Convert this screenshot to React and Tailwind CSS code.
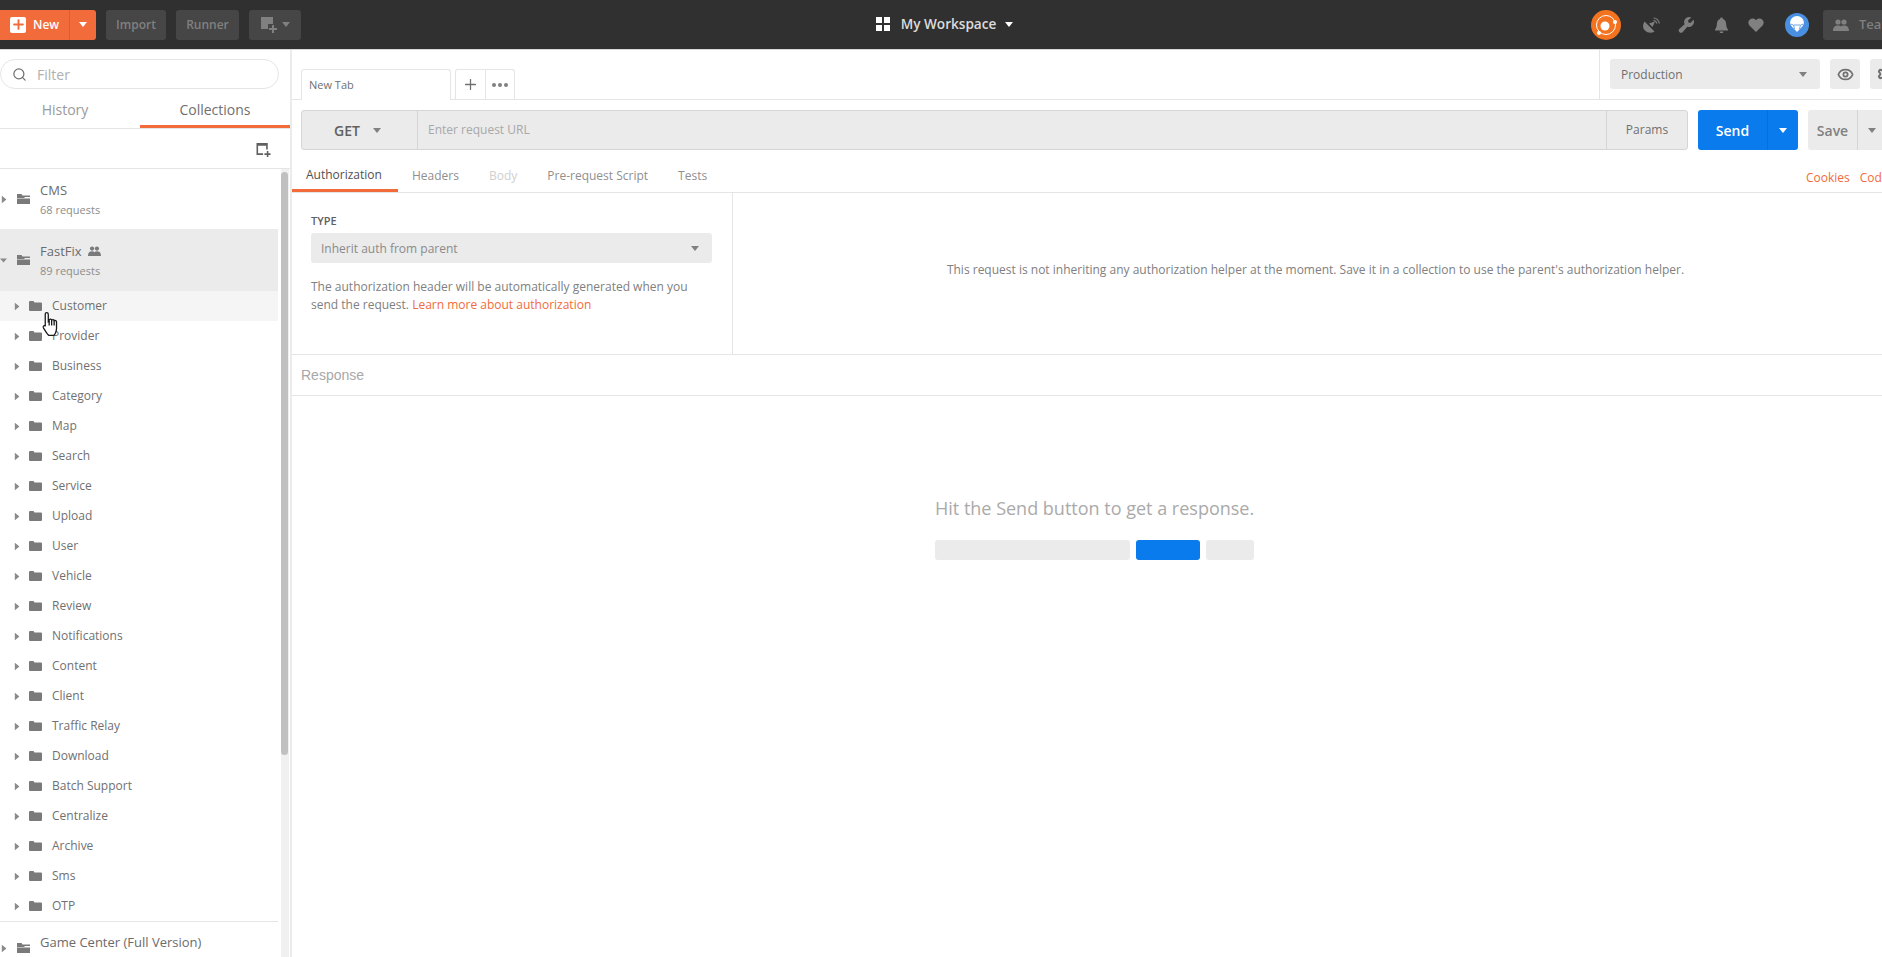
import { Eye, Plus, Search, Settings } from 'lucide-react';

const folders = [
  'Customer', 'Provider', 'Business', 'Category', 'Map', 'Search', 'Service', 'Upload', 'User', 'Vehicle',
  'Review', 'Notifications', 'Content', 'Client', 'Traffic Relay', 'Download', 'Batch Support', 'Centralize',
  'Archive', 'Sms', 'OTP',
];

const requestTabs = [
  { name: 'Authorization', cls: 'w-[106px] pl-[14px] text-[#505050] border-b-[3px] border-[#f26b3a]' },
  { name: 'Headers', cls: 'pl-[14px] pr-[15px] text-[#8f8f8f]' },
  { name: 'Body', cls: 'pl-[15px] pr-[15px] text-[#d0d0d0]' },
  { name: 'Pre-request Script', cls: 'pl-[15px] pr-[15px] text-[#8f8f8f]' },
  { name: 'Tests', cls: 'pl-[15px] pr-[15px] text-[#8f8f8f]' },
];

const Caret = ({ className = '', dir = 'down' }) => (
  <svg viewBox="0 0 10 6" className={`shrink-0 fill-current ${dir === 'right' ? '-rotate-90' : ''} ${className}`}>
    <path d="M0 0h10L5 6z" />
  </svg>
);

const ClosedFolder = () => (
  <svg viewBox="0 0 13 10" className="w-[13px] h-[10px] fill-[#7a7a7a] shrink-0">
    <path d="M0 1a1 1 0 0 1 1-1h3.500l1 1.500H12a1 1 0 0 1 1 1V9a1 1 0 0 1-1 1H1a1 1 0 0 1-1-1z" />
  </svg>
);

const CollectionFolder = () => (
  <svg viewBox="0 0 13 10" className="w-[13px] h-[10px] fill-[#7a7a7a] shrink-0">
    <path d="M0 0h4.500l1 1.500H13V3H8L7 4H0zM0 4.600h13V10H0z" />
  </svg>
);

const SharedIcon = ({ className = '' }) => (
  <svg viewBox="0 0 16 12" className={`fill-current shrink-0 ${className}`}>
    <circle cx="5" cy="3" r="2.600" />
    <circle cx="11" cy="3" r="2.600" />
    <path d="M0 12c0-4 2-5.600 5-5.600 1.400 0 2.400.3 3 1 .7-.7 1.600-1 3-1 3 0 5 1.600 5 5.600z" />
  </svg>
);

const CollectionRow = ({ name, count, open, shared, className = '' }) => (
  <div className={`flex items-center w-[278px] shrink-0 ${className}`}>
    <Caret dir={open ? 'down' : 'right'} className={`text-[#8a8a8a] ${open ? 'w-[7px] h-[5px]' : 'w-[8px] h-[5px]'}`} />
    <div className={open ? 'ml-[10px]' : 'ml-[9px]'}><CollectionFolder /></div>
    <div className="ml-[10px]">
      <div className="flex items-center gap-[6px] text-[13px] leading-[17px] text-[#6b6b6b]">
        {name}
        {shared && <SharedIcon className="w-[13px] h-[10px] text-[#7a7a7a]" />}
      </div>
      <div className="text-[11px] leading-[15px] mt-[3px] text-[#8d8d8d]">{count}</div>
    </div>
  </div>
);

const FolderRow = ({ name, hover }) => (
  <div className={`flex items-center h-[30px] shrink-0 pl-[13px] ${hover ? 'bg-[#f5f5f5]' : ''}`}>
    <Caret dir="right" className="text-[#8a8a8a] w-[8px] h-[5px]" />
    <div className="ml-[8px]"><ClosedFolder /></div>
    <span className="ml-[10px] text-[12px] text-[#707070]">{name}</span>
  </div>
);

const DarkButton = ({ children, className = '' }) => (
  <div className={`h-[30px] shrink-0 rounded-[3px] bg-[#464646] flex items-center justify-center text-[12px] font-semibold text-[#808080] ${className}`}>
    {children}
  </div>
);

const Header = () => (
  <div className="h-[50px] shrink-0 bg-[#303030] flex items-center relative border-b border-[#d8d8d8]">
    <div className="h-[30px] w-[96px] rounded-r-[3px] bg-[#f26b3a] flex items-center text-white shrink-0">
      <div className="ml-[10px] w-[16px] h-[16px] bg-white rounded-[2px] flex items-center justify-center">
        <Plus size={15} strokeWidth={3} className="text-[#f26b3a]" />
      </div>
      <span className="ml-[7px] text-[12px] font-semibold w-[36px]">New</span>
      <div className="h-full w-[27px] border-l border-[#d95f33] flex items-center justify-center">
        <Caret className="text-white w-[8px] h-[5px]" />
      </div>
    </div>
    <DarkButton className="ml-[10px] w-[60px]">Import</DarkButton>
    <DarkButton className="ml-[10px] w-[63px]">Runner</DarkButton>
    <DarkButton className="ml-[10px] w-[52px] gap-[5px]">
      <svg viewBox="0 0 16 16" className="w-[16px] h-[16px] fill-[#808080]">
        <path d="M0 0h12v7H7v5H0zM11 8h2v3h3v2h-3v3h-2v-3H8v-2h3z" />
      </svg>
      <Caret className="text-[#808080] w-[8px] h-[5px]" />
    </DarkButton>

    <div className="flex-1 flex items-center justify-center pr-[3px]">
      <svg viewBox="0 0 14 14" className="w-[14px] h-[14px] fill-white mr-[11px]">
        <path d="M0 0h6v6H0zM8 0h6v6H8zM0 8h6v6H0zM8 8h6v6H8z" />
      </svg>
      <span className="text-[13.600px] font-semibold text-[#dcdcdc]">My Workspace</span>
      <Caret className="text-white ml-[9px] w-[8px] h-[5px]" />
    </div>

    <div className="flex items-center shrink-0 w-[291px] overflow-hidden">
      <svg viewBox="0 0 30 30" className="w-[30px] h-[30px] shrink-0">
        <circle cx="15" cy="15" r="15" fill="#f47321" />
        <circle cx="15" cy="15" r="9.500" fill="none" stroke="#fff" strokeWidth="1" />
        <circle cx="14" cy="16" r="4.500" fill="#fff" />
        <circle cx="24" cy="12" r="2" fill="#fff" />
        <circle cx="8" cy="23" r="2" fill="#fff" />
      </svg>
      {/* satellite dish */}
      <svg viewBox="0 0 17 16" className="ml-[22px] w-[17px] h-[16px] shrink-0 fill-[#808080]">
        <path d="M1.500 4.500l10 10c-3 2-7 1.500-9.500-1s-2.500-6-.5-9z" />
        <path d="M6 6.500l3.500 3.500 2.500-5.500z" />
        <path d="M10.500 1c3 0 5.500 2.500 5.800 5.500M10.500 3.500c1.800 0 3 1.200 3.300 3" fill="none" stroke="#808080" strokeWidth="1.200" />
      </svg>
      {/* wrench */}
      <svg viewBox="0 0 16 16" className="ml-[18px] w-[16px] h-[16px] shrink-0 fill-[#808080]">
        <path d="M11 0c1 0 1.700.2 2.300.6L10 3.500l.5 2 2 .5L15.400 2.700c.4.700.6 1.400.6 2.300a5 5 0 0 1-6.700 4.700l-4.500 5.200a2.300 2.300 0 0 1-3.500-3l5.300-4.700A5 5 0 0 1 11 0z" />
      </svg>
      {/* bell */}
      <svg viewBox="0 0 14 16" className="ml-[21px] w-[13px] h-[16px] shrink-0 fill-[#808080]">
        <path d="M7 0c1 0 1.500.6 1.500 1.500C11 2.200 12 4.500 12 7c0 3 1 4.500 2 6v1H0v-1c1-1.500 2-3 2-6 0-2.500 1-4.800 3.500-5.500C5.500.6 6 0 7 0zM5 15h4a2 2 0 0 1-4 0z" />
      </svg>
      {/* heart */}
      <svg viewBox="0 0 16 14" className="ml-[20px] w-[16px] h-[14px] shrink-0 fill-[#808080]">
        <path d="M8 14L1.200 7.200A4.200 4.200 0 0 1 8 2.200a4.200 4.200 0 0 1 6.800 5z" />
      </svg>
      {/* parachute avatar */}
      <svg viewBox="0 0 24 24" className="ml-[21px] w-[24px] h-[24px] shrink-0">
        <circle cx="12" cy="12" r="12" fill="#4a90e2" />
        <path d="M5 10a7 7 0 0 1 14 0c0 2-4 6-7 9-3-3-7-7-7-9z" fill="#fff" />
        <path d="M5.500 11l3 1 1 4M18.500 11l-3 1-1 4M9 12h6" stroke="#4a90e2" strokeWidth=".8" fill="none" />
      </svg>
      <DarkButton className="ml-[14px] w-[90px] justify-start pl-[10px] gap-[10px] font-normal">
        <SharedIcon className="w-[16px] h-[12px] text-[#808080]" />
        <span className="text-[13px]">Team</span>
      </DarkButton>
    </div>
  </div>
);

const Sidebar = () => (
  <div className="w-[292px] shrink-0 border-r-[2px] border-[#ebebeb] flex flex-col relative overflow-hidden">
    <div className="h-[39px] shrink-0 pt-[9px] pr-[11px]">
      <div className="h-[30px] rounded-full border border-[#e5e5e5] flex items-center pl-[11px] text-[#b0b0b0] text-[14px]">
        <Search size={15} strokeWidth={2} className="text-[#707070] mr-[10px]" />
        Filter
      </div>
    </div>
    <div className="h-[40px] shrink-0 flex border-b border-[#e5e5e5] text-[14px]">
      <div className="w-[140px] flex items-center justify-center pt-[2px] pr-[10px] text-[#9a9a9a]">History</div>
      <div className="flex-1 flex items-center justify-center pt-[5px] text-[#707070] border-b-[3px] border-[#f26b3a]">Collections</div>
    </div>
    <div className="h-[40px] shrink-0 flex items-center justify-end pr-[18px] pt-[3px] border-b border-[#e5e5e5]">
      <svg viewBox="0 0 16 16" className="w-[16px] h-[15px] fill-[#606060]">
        <path d="M0 0h12v7h-1.700V3H1.700v8H7v1.700H0zM11 8.500h1.700V11H15v1.700h-2.300V15H11v-2.300H8.500V11H11z" />
      </svg>
    </div>
    <div className="flex-1 flex min-h-0">
      <div className="w-[278px] flex flex-col shrink-0">
        <CollectionRow name="CMS" count="68 requests" className="h-[60px]" />
        <CollectionRow name="FastFix" count="89 requests" open shared className="h-[62px] bg-[#ebebeb]" />
        {folders.map((f) => (
          <FolderRow key={f} name={f} hover={f === 'Customer'} />
        ))}
        <div className="border-t border-[#e5e5e5]">
          <div className="flex items-start pt-[12px]">
            <Caret dir="right" className="text-[#8a8a8a] w-[8px] h-[5px] mt-[12px]" />
            <div className="ml-[9px] mt-[9px]"><CollectionFolder /></div>
            <span className="ml-[10px] text-[13px] leading-[17px] text-[#6b6b6b]">Game Center (Full Version)</span>
          </div>
        </div>
      </div>
      <div className="w-[8px] ml-[3px] mr-[1px] bg-[#f0f0f0] pt-[3px] h-full">
        <div className="h-[583px] w-[7px] rounded-full bg-[#c0c0c0]" />
      </div>
    </div>

    {/* hand cursor over the hovered folder */}
    <svg viewBox="0 0 18 24" className="absolute left-[41px] top-[261px] w-[20px] h-[26px] fill-white stroke-[#1a1a1a]" strokeWidth="1.200">
      <path d="M5 1.500c1 0 1.500.7 1.500 1.700V10l.8-.2V8c.9-.8 2-.5 2.300.3.900-.6 2-.4 2.300.5 1-.4 2.100.1 2.200 1.200V16c0 3-1.500 6-2.500 6.500H7c-1.500-1-2.500-3-5-7-.7-1.200.4-2.500 1.500-1.800l.2-.2V3.200C3.700 2.200 4 1.500 5 1.500z" />
      <path d="M7.300 9.800v3.500M9.600 8.300v5M11.900 8.800v4.500" fill="none" />
    </svg>
  </div>
);

const Builder = () => (
  <div className="flex-1 min-w-0 flex flex-col overflow-hidden">
    {/* tabs and environment */}
    <div className="h-[50px] shrink-0 flex border-b border-[#e5e5e5] relative">
      <div className="flex-1 flex items-end pl-[9px]">
        <div className="h-[31px] -mb-[1px] w-[150px] bg-white border border-b-0 border-[#e5e5e5] rounded-t-[3px] flex items-center pl-[7px] text-[11px] text-[#707070]">
          New Tab
        </div>
        <div className="ml-[4px] h-[30px] flex border border-b-0 border-[#e5e5e5] rounded-t-[3px]">
          <div className="w-[30px] flex items-center justify-center border-r border-[#e5e5e5]">
            <Plus size={17} strokeWidth={1.800} className="text-[#707070]" />
          </div>
          <div className="w-[28px] flex items-center justify-center gap-[2px]">
            <span className="w-[4px] h-[4px] rounded-full bg-[#808080]" />
            <span className="w-[4px] h-[4px] rounded-full bg-[#808080]" />
            <span className="w-[4px] h-[4px] rounded-full bg-[#808080]" />
          </div>
        </div>
      </div>
      <div className="w-[283px] shrink-0 border-l border-[#e5e5e5] pt-[9px] pl-[10px] flex items-start overflow-hidden">
        <div className="w-[210px] shrink-0 h-[30px] rounded-[3px] bg-[#ebebeb] flex items-center justify-between pl-[11px] pr-[13px] pt-[1px] text-[12px] text-[#707070]">
          Production
          <Caret className="text-[#808080] w-[8px] h-[5px]" />
        </div>
        <div className="ml-[10px] w-[30px] shrink-0 h-[30px] rounded-[3px] bg-[#ebebeb] flex items-center justify-center">
          <Eye size={17} strokeWidth={2.500} className="text-[#707070]" />
        </div>
        <div className="ml-[10px] w-[30px] shrink-0 h-[30px] rounded-[3px] bg-[#ebebeb] flex items-center justify-center">
          <Settings size={16} strokeWidth={3} className="text-[#707070]" />
        </div>
      </div>
    </div>

    {/* url bar */}
    <div className="h-[60px] shrink-0 flex pt-[10px] pl-[9px]">
      <div className="h-[40px] w-[1387px] shrink-0 flex rounded-[3px] border border-[#d5d5d5] bg-[#ebebeb]">
        <div className="w-[116px] shrink-0 flex items-center border-r border-[#d5d5d5] gap-[13px] text-[14px] font-semibold text-[#606060] pl-[32px]">
          GET
          <Caret className="text-[#808080] w-[8px] h-[5px]" />
        </div>
        <div className="flex-1 flex items-center pl-[10px] text-[12px] text-[#a8a8a8]">Enter request URL</div>
        <div className="w-[81px] shrink-0 flex items-center justify-center border-l border-[#d5d5d5] text-[12px] text-[#707070]">Params</div>
      </div>
      <div className="ml-[10px] h-[40px] w-[100px] shrink-0 flex rounded-[3px] bg-[#097bed] text-white">
        <div className="w-[69px] flex items-center justify-center text-[14px] font-semibold">Send</div>
        <div className="flex-1 border-l border-[#0a6fd4] flex items-center justify-center">
          <Caret className="text-white w-[8px] h-[5px]" />
        </div>
      </div>
      <div className="ml-[10px] h-[40px] w-[100px] shrink-0 flex rounded-[3px] bg-[#ebebeb] text-[#808080]">
        <div className="w-[49px] flex items-center justify-center text-[14px] font-semibold">Save</div>
        <div className="w-[28px] border-l border-[#d5d5d5] flex items-center justify-center">
          <Caret className="text-[#808080] w-[8px] h-[5px]" />
        </div>
      </div>
    </div>

    {/* request sub tabs */}
    <div className="h-[33px] shrink-0 flex border-b border-[#e5e5e5] text-[12px]">
      {requestTabs.map((t) => (
        <div key={t.name} className={`flex items-center ${t.cls}`}>{t.name}</div>
      ))}
      <div className="ml-auto flex items-center pt-[3px] text-[12px] text-[#f26b3a] gap-[10px] w-[76px] whitespace-nowrap shrink-0 overflow-hidden">
        <span>Cookies</span>
        <span>Code</span>
      </div>
    </div>

    {/* auth panel */}
    <div className="h-[162px] shrink-0 flex border-b border-[#e5e5e5]">
      <div className="w-[441px] shrink-0 border-r border-[#e5e5e5] pl-[19px] pr-[20px] pt-[20px]">
        <div className="text-[11px] leading-[16px] font-semibold text-[#606060]">TYPE</div>
        <div className="mt-[4px] h-[30px] rounded-[3px] bg-[#ebebeb] flex items-center justify-between pl-[10px] pr-[13px] pt-[1px] text-[12px] text-[#8a8a8a]">
          Inherit auth from parent
          <Caret className="text-[#808080] w-[8px] h-[5px]" />
        </div>
        <p className="mt-[15px] text-[12px] leading-[18px] text-[#808080]">
          The authorization header will be automatically generated when you send the request.{' '}
          <span className="text-[#f26b3a]">Learn more about authorization</span>
        </p>
      </div>
      <div className="flex-1 flex justify-center pt-[68px] pl-[16px] text-[12px] leading-[18px] text-[#808080] whitespace-nowrap">
        This request is not inheriting any authorization helper at the moment. Save it in a collection to use the parent's authorization helper.
      </div>
    </div>

    {/* response */}
    <div className="h-[41px] shrink-0 flex items-center pl-[9px] border-b border-[#e5e5e5] font-['Liberation_Sans',sans-serif] text-[14px] text-[#a8a8a8]">
      Response
    </div>
    <div className="flex-1 pt-[99px] pl-[643px]">
      <div className="text-[18px] leading-[26px] text-[#aaaaaa] whitespace-nowrap">Hit the Send button to get a response.</div>
      <div className="mt-[19px] flex gap-[6px]">
        <div className="w-[195px] h-[20px] rounded-[3px] bg-[#ebebeb]" />
        <div className="w-[64px] h-[20px] rounded-[3px] bg-[#097bed]" />
        <div className="w-[48px] h-[20px] rounded-[3px] bg-[#ebebeb]" />
      </div>
    </div>
  </div>
);

export default function App() {
  return (
    <div className="h-[957px] w-[1882px] overflow-hidden flex flex-col bg-white font-['Open_Sans',sans-serif]">
      <Header />
      <div className="flex-1 min-h-0 flex">
        <Sidebar />
        <Builder />
      </div>
    </div>
  );
}
